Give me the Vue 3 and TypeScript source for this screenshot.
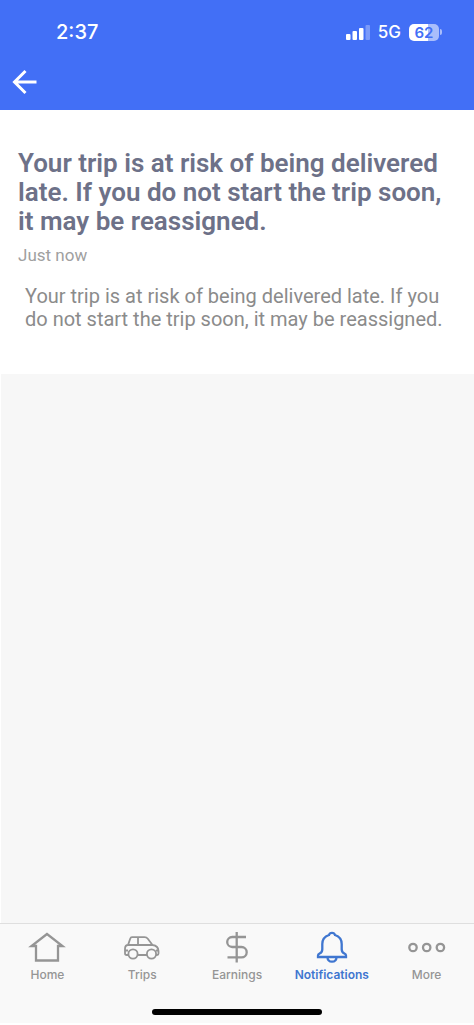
<script setup lang="ts">
interface Tab {
  id: string
  label: string
  active?: boolean
}

const title = 'Your trip is at risk of being delivered late. If you do not start the trip soon, it may be reassigned.'
const message = title
const battery = 62

const tabs: Tab[] = [
  { id: 'home', label: 'Home' },
  { id: 'trips', label: 'Trips' },
  { id: 'earnings', label: 'Earnings' },
  { id: 'notifications', label: 'Notifications', active: true },
  { id: 'more', label: 'More' },
]
</script>

<template>
  <div class="screen">
    <header class="top">
      <div class="status">
        <span class="time">2:37</span>
        <div class="indicators">
          <svg class="signal" width="24" height="16" viewBox="0 0 24 16" fill="#fff" aria-hidden="true">
            <rect x="0" y="10" width="4.500" height="6" rx="1" />
            <rect x="6.500" y="7" width="4.500" height="9" rx="1" />
            <rect x="13" y="4" width="4.500" height="12" rx="1" />
            <rect x="19.500" y="1" width="4.500" height="15" rx="1" opacity=".3" />
          </svg>
          <span class="network">5G</span>
          <span class="battery">
            <span class="cell"><span class="level">{{ battery }}</span></span>
            <span class="nub"></span>
          </span>
        </div>
      </div>
      <button class="back" type="button" aria-label="Back">
        <svg width="26" height="26" viewBox="0 0 26 26" fill="none" stroke="#fff" stroke-width="3" aria-hidden="true">
          <path d="M24.500 13H2.500M13.500 2 2.500 13l11 11" />
        </svg>
      </button>
    </header>

    <main class="content">
      <article class="notice">
        <h1>{{ title }}</h1>
        <time>Just now</time>
        <p>{{ message }}</p>
      </article>
    </main>

    <nav class="tabs">
      <ul>
        <li v-for="tab in tabs" :key="tab.id">
          <a :href="'#' + tab.id" :class="{ active: tab.active }" :aria-current="tab.active ? 'page' : undefined">
            <svg v-if="tab.id === 'home'" width="40" height="34" viewBox="0 0 40 34" aria-hidden="true">
              <path d="M20 4 4.500 16H9V30.500h22V16h4.500Z" />
            </svg>
            <svg v-else-if="tab.id === 'trips'" class="fine" width="40" height="34" viewBox="0 0 40 34" aria-hidden="true">
              <path d="M6.500 25H4.800C3.600 25 3 24.400 3 23.200V19c0-2.500 1-4 3-4L8.200 8.700C8.600 7.500 9 7.200 10 7.200h12.500c1.500 0 2.400.4 3.300 1.600L30.500 15c4 .6 6 2.800 6 6v2.500c0 1-.5 1.500-1.500 1.500h-1M15.500 25h9.500M6 15h24.500M16 7.200V15M3 20.500h3M34 20.500h2.500" />
              <circle cx="11" cy="24" r="4.600" />
              <circle cx="29.500" cy="24" r="4.600" />
            </svg>
            <svg v-else-if="tab.id === 'earnings'" width="40" height="34" viewBox="0 0 40 34" aria-hidden="true">
              <path d="M29 7H15.200a5 5 0 0 0 0 10H24.500a5.200 5.200 0 0 1 0 10.400H10.500M19.700 2v30.500" />
            </svg>
            <svg v-else-if="tab.id === 'notifications'" width="40" height="34" viewBox="0 0 40 34" aria-hidden="true">
              <path d="M20 2.800c-1.600 0-2.600.8-3 2.200-4.300 1.400-6.700 4.700-6.700 9v5.200c0 2.300-1 3.500-2.700 4.300-1 .5-1.600 1-1.600 2V27h28v-1.500c0-1-.6-1.500-1.600-2-1.700-.8-2.700-2-2.700-4.300V14c0-4.300-2.400-7.600-6.700-9-.4-1.400-1.400-2.200-3-2.200ZM15.300 27c.3 3 2.100 4.700 4.700 4.700s4.400-1.700 4.700-4.700" />
            </svg>
            <svg v-else width="40" height="34" viewBox="0 0 40 34" aria-hidden="true">
              <circle cx="6" cy="17.500" r="3.700" />
              <circle cx="19.700" cy="17.500" r="3.700" />
              <circle cx="33.400" cy="17.500" r="3.700" />
            </svg>
            <span>{{ tab.label }}</span>
          </a>
        </li>
      </ul>
      <div class="home-bar"></div>
    </nav>
  </div>
</template>

<style>
body {
  margin: 0;
  background: #fff;
}
</style>

<style scoped>
.screen {
  display: flex;
  flex-direction: column;
  box-sizing: border-box;
  min-height: 100vh;
  padding-bottom: 2px;
  font-family: Roboto, "Liberation Sans", sans-serif;
}

.top {
  display: flex;
  flex-direction: column;
  gap: 21px;
  padding: 20px 32px 11px 8px;
  background: #426ff6;
  color: #fff;
}

.status {
  display: flex;
  align-items: center;
  justify-content: space-between;
  height: 24px;
  padding-left: 48px;
  font-family: Inter, "Liberation Sans", sans-serif;
}

.time {
  font-size: 20px;
  font-weight: 500;
}

.indicators {
  display: flex;
  align-items: center;
  gap: 8px;
}

.network {
  font-size: 17px;
  font-weight: 500;
}

.battery {
  display: flex;
  align-items: center;
  gap: 1px;
}

.cell {
  width: 30px;
  height: 17px;
  border-radius: 5px;
  background: linear-gradient(to right, #fff 62%, #a9bdfb 62%);
  color: #426ff6;
  font-size: 15px;
  font-weight: 600;
  line-height: 17px;
  text-align: center;
}

.nub {
  width: 2px;
  height: 6px;
  border-radius: 0 2px 2px 0;
  background: #a9bdfb;
}

.back {
  display: flex;
  align-self: flex-start;
  padding: 4px;
  border: 0;
  background: none;
  cursor: pointer;
}

.content {
  flex: 1;
  margin-left: 1px;
  background: #f7f7f7;
}

.notice {
  padding: 39px 16px 43px 17px;
  background: #fff;
}

h1 {
  margin: 0;
  color: #6d7188;
  font-size: 26px;
  font-weight: 600;
  line-height: 29px;
}

time {
  display: block;
  margin-top: 9px;
  color: #a0a0a0;
  font-size: 17px;
  line-height: 20px;
}

p {
  margin: 20px 0 0 7px;
  color: #8b8b8b;
  font-size: 20px;
  line-height: 23px;
}

.tabs {
  padding-bottom: 8px;
  border-top: 1px solid #dfdfdf;
  background: #f9f9f9;
}

ul {
  display: flex;
  margin: 0;
  padding: 0;
  list-style: none;
}

li {
  flex: 1;
}

a {
  display: flex;
  flex-direction: column;
  align-items: center;
  padding-top: 6px;
  color: #959595;
  font-family: Inter, "Liberation Sans", sans-serif;
  font-size: 12px;
  font-weight: 500;
  line-height: 22px;
  text-decoration: none;
}

a.active {
  color: #3f76d0;
  font-weight: 600;
}

a svg {
  fill: none;
  stroke: currentColor;
  stroke-width: 2.3;
}

a svg.fine {
  stroke-width: 1.8;
}

.home-bar {
  width: 36%;
  height: 6px;
  margin: 23px auto 0;
  border-radius: 3px;
  background: #000;
}
</style>
